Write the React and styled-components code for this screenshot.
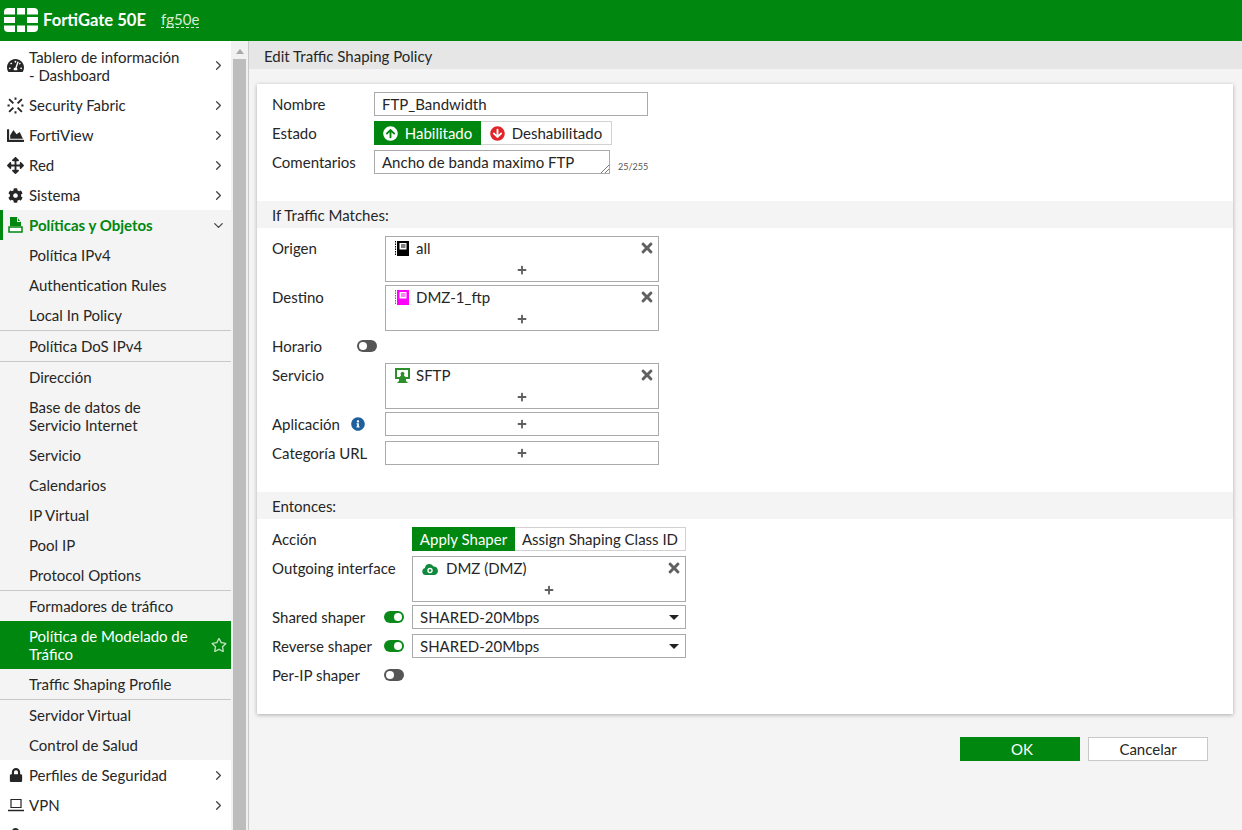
import styled, { createGlobalStyle } from "styled-components";
import {
  FaTachometerAlt,
  FaChartArea,
  FaArrowsAlt,
  FaCog,
  FaLock,
  FaArrowCircleUp,
  FaArrowCircleDown,
  FaTimes,
  FaPlus,
  FaInfoCircle,
  FaRegStar,
  FaUser,
} from "react-icons/fa";
import { FiChevronRight, FiChevronDown } from "react-icons/fi";

const GREEN = "#00870f";

const Global = createGlobalStyle`
  html, body {
    margin: 0;
    height: 100%;
    overflow: hidden;
    background: #f4f4f4;
    font-family: Lato, "Liberation Sans", sans-serif;
    font-size: 15px;
    color: #262626;
  }
  * { box-sizing: border-box; }
`;

const Logo = () => (
  <svg width="34" height="24" viewBox="0 0 34 24">
    <g fill="#fff">
      <path d="M0 6.500V4a4 4 0 0 1 4-4h7v6.500z" />
      <path d="M13 0h8v6.500h-8z" />
      <path d="M23 0h7a4 4 0 0 1 4 4v2.500H23z" />
      <path d="M0 9h11v6H0z" />
      <path d="M23 9h11v6H23z" />
      <path d="M0 17.500h11V24H4a4 4 0 0 1-4-4z" />
      <path d="M13 17.500h8V24h-8z" />
      <path d="M23 17.500h11V20a4 4 0 0 1-4 4h-7z" />
    </g>
  </svg>
);

const FabricIcon = () => (
  <svg width="17" height="17" viewBox="0 0 16 16" fill="none" stroke="#262626" strokeWidth="1.800">
    <path d="M2 2l4 4M10 10l4 4M14 2l-4 4M6 10l-4 4M8 .5v2M8 13.500v2M.5 8h2M13.500 8h2" />
  </svg>
);

const LaptopIcon = () => (
  <svg width="16" height="14" viewBox="0 0 16 14" fill="none" stroke="#262626" strokeWidth="1.200">
    <path d="M3 1.500h10v8H3z" />
    <path strokeWidth="1.500" d="M0 12.500h16" />
  </svg>
);

const PolicyIcon = () => (
  <svg width="15" height="16" viewBox="0 0 15 16">
    <path fill={GREEN} d="M2 0h7l4 5v4H2z" />
    <path fill="#f4f4f4" d="M9 0v5h4z" />
    <path fill={GREEN} d="M10 1.500l2 2.500h-2z" />
    <path fill="#fff" stroke={GREEN} strokeWidth="1.500" d="M1 10h13v5H1z" />
  </svg>
);

const BookIcon = ({ color }) => (
  <svg width="15" height="15" viewBox="0 0 15 15">
    <path fill={color} d="M2 0h12v15H2z" />
    <path fill="#fff" d="M4.500 2h7v6.500h-7z" />
    <path fill={color} d="M6 3.500h4.500v1H6zM6 5.500h4.500v1H6z" />
    <path fill="none" stroke={color} strokeDasharray="1.500 1" d="M.5 0v15" />
  </svg>
);

const ServiceIcon = () => (
  <svg width="15" height="15" viewBox="0 0 15 15">
    <path fill="#2c8f2c" d="M0 0h15v11h-4v2l2 2H2l2-2v-2H0z" />
    <path fill="#fff" d="M2 2h11v7h-2.500L9 7.500V7a2 2 0 0 0 0-2.500 2 2 0 0 0-3 0A2 2 0 0 0 6 7v.5L4.500 9H2z" />
  </svg>
);

const CloudIcon = () => (
  <svg width="16" height="12" viewBox="0 0 16 12">
    <path fill="#0f8a3c" d="M4 12a3.500 3.500 0 0 1-1-6.900A4.500 4.500 0 0 1 11.500 3.500 4.300 4.300 0 0 1 12.500 12z" />
    <circle cx="8" cy="7.500" r="2.700" fill="#fff" />
    <circle cx="8" cy="7.500" r="1.300" fill="#0f8a3c" />
  </svg>
);

const Page = styled.div`
  width: 1242px;
  height: 830px;
  display: flex;
  flex-direction: column;
  overflow: hidden;
`;

const Header = styled.header`
  height: 41px;
  flex: none;
  background: ${GREEN};
  color: #fff;
  display: flex;
  align-items: center;
  padding: 0 0 1px 4px;
`;

const Brand = styled.span`
  margin-left: 5px;
  font-size: 16.600px;
  font-weight: 700;
`;

const HostName = styled.span`
  margin-left: 15px;
  font-size: 15px;
  color: #d6ecd6;
  border-bottom: 1px dashed #cfe6cf;
  line-height: 15px;
`;

const Body = styled.div`
  flex: 1;
  display: flex;
  min-height: 0;
`;

const Nav = styled.nav`
  width: 231px;
  flex: none;
  background: #fff;
  overflow: hidden;
`;

const Item = styled.div`
  position: relative;
  display: flex;
  align-items: center;
  min-height: ${(p) => (p.$h ? p.$h : p.$tall ? 48 : p.$rule ? 31 : 30)}px;
  padding: ${(p) => (p.$sub ? "0 40px 0 29px" : "0 5px 0 29px")};
  line-height: 18px;
  background: ${(p) => (p.$active ? GREEN : p.$tint ? "#f4f4f4" : "transparent")};
  color: ${(p) => (p.$active ? "#fff" : p.$open ? GREEN : "inherit")};
  font-weight: ${(p) => (p.$open ? 700 : 400)};
  border-top: ${(p) => (p.$rule ? "1px solid #c8c8c8" : "0")};
  box-shadow: ${(p) => (p.$open ? `inset 3px 0 0 ${GREEN}` : "none")};
`;

const ItemIcon = styled.span`
  position: absolute;
  left: 7px;
  top: 50%;
  transform: translateY(-50%);
  width: 17px;
  height: 16px;
  display: flex;
  align-items: center;
  justify-content: center;
  font-size: ${(p) => p.$size || 17}px;
  color: #262626;
`;

const Chevron = styled.span`
  margin-left: auto;
  display: flex;
  width: 15px;
  font-size: 15px;
  color: #444;
`;

const StarMark = styled(FaRegStar)`
  position: absolute;
  right: 4px;
  top: 16px;
  font-size: 16px;
  color: #bfe3c0;
`;

const ScrollTrack = styled.div`
  width: 18px;
  flex: none;
  background: #f1f1f1;
  border-right: 1px solid #c9c9c9;
  padding: 8px 2px 0 2px;
  display: flex;
  flex-direction: column;
  align-items: center;
`;

const ScrollUp = styled.div`
  border: 4px solid transparent;
  border-top: 0;
  border-bottom: 5px solid #a9a9a9;
  margin-bottom: 5px;
`;

const ScrollThumb = styled.div`
  width: 13px;
  flex: 1;
  background: #bdbdbd;
`;

const Main = styled.main`
  flex: 1;
  min-width: 0;
  background: #f4f4f4;
`;

const TitleBar = styled.div`
  height: 28px;
  background: #e6e6e6;
  padding-left: 15px;
  line-height: 31px;
`;

const Card = styled.section`
  margin: 15px 9px 0 8px;
  height: 630px;
  background: #fff;
  box-shadow: 0 1px 4px rgba(0, 0, 0, 0.3);
  padding-top: 8px;
`;

const Block = styled.div`
  padding-left: 15px;
  padding-top: ${(p) => p.$pt || 0}px;
  padding-bottom: ${(p) => p.$pb || 0}px;
`;

const Row = styled.div`
  display: flex;
  align-items: flex-start;
  min-height: 24px;
  margin-bottom: ${(p) => p.$mb ?? 5}px;
  line-height: 24px;
`;

const Label = styled.div`
  width: ${(p) => p.$w}px;
  flex: none;
  display: flex;
  align-items: center;
  height: 24px;
`;

const TextField = styled.div`
  width: 274px;
  height: 24px;
  border: 1px solid #aaa;
  padding-left: 7px;
  line-height: 22px;
`;

const Comment = styled.div`
  position: relative;
  width: 236px;
  height: 24px;
  border: 1px solid #aaa;
  padding-left: 7px;
  line-height: 22px;
`;

const Grip = styled.svg`
  position: absolute;
  right: 0;
  bottom: 0;
`;

const Counter = styled.span`
  margin-left: 8px;
  font-size: 9px;
  line-height: 10px;
  padding-top: 12px;
  color: #555;
`;

const Segment = styled.div`
  height: 24px;
  display: flex;
  align-items: center;
  gap: ${(p) => (p.$icon ? 7 : 0)}px;
  width: ${(p) => p.$w}px;
  justify-content: center;
  flex: none;
  background: ${(p) => (p.$on ? GREEN : "#fff")};
  color: ${(p) => (p.$on ? "#fff" : "inherit")};
  border: 1px solid ${(p) => (p.$on ? GREEN : "#d2d2d2")};
  border-left-width: ${(p) => (p.$on ? 1 : 0)}px;
  svg { font-size: 15px; }
`;

const SectionHead = styled.div`
  height: 27px;
  background: #f4f4f4;
  padding-left: 15px;
  line-height: 29px;
`;

const Picker = styled.div`
  position: relative;
  width: 274px;
  height: ${(p) => (p.$single ? 24 : 46)}px;
  border: 1px solid #aaa;
`;

const Entry = styled.div`
  display: flex;
  align-items: center;
  height: 23px;
  padding-left: ${(p) => p.$pl || 9}px;
  gap: ${(p) => p.$gap || 6}px;
  line-height: 23px;
`;

const RemoveMark = styled(FaTimes)`
  position: absolute;
  right: 3px;
  top: 3px;
  font-size: 16px;
  color: #606060;
`;

const AddMark = styled.div`
  display: flex;
  align-items: center;
  justify-content: center;
  height: ${(p) => (p.$single ? 22 : 20)}px;
  padding-right: 1px;
  font-size: 10px;
  color: #606060;
`;

const Toggle = styled.span`
  position: relative;
  display: inline-block;
  width: 20px;
  height: 12px;
  border-radius: 6px;
  background: ${(p) => (p.$on ? "#0b8a1a" : "#555")};
  &::after {
    content: "";
    position: absolute;
    top: 2px;
    left: ${(p) => (p.$on ? "10px" : "2px")};
    width: 8px;
    height: 8px;
    border-radius: 50%;
    background: #fff;
  }
`;

const Select = styled.div`
  width: 274px;
  height: 24px;
  border: 1px solid #aaa;
  padding: 0 6px 0 7px;
  display: flex;
  align-items: center;
  justify-content: space-between;
  &::after {
    content: "";
    border: 5.500px solid transparent;
    border-top: 5px solid #222;
    border-bottom: 0;
  }
`;

const HintIcon = styled(FaInfoCircle)`
  margin-left: 11px;
  font-size: 14px;
  color: #1f5f9c;
`;

const Actions = styled.div`
  display: flex;
  justify-content: flex-end;
  gap: 8px;
  margin: 23px 34px 0 0;
`;

const ActionButton = styled.button`
  width: 120px;
  height: 24px;
  padding: 0 0 0 ${(p) => (p.$primary ? 4 : 0)}px;
  font: inherit;
  background: ${(p) => (p.$primary ? GREEN : "#fff")};
  color: ${(p) => (p.$primary ? "#fff" : "inherit")};
  border: 1px solid ${(p) => (p.$primary ? GREEN : "#c8c8c8")};
`;

const menu = [
  { text: <>Tablero de información<br />- Dashboard</>, icon: <FaTachometerAlt />, more: true, h: 49 },
  { text: "Security Fabric", icon: <FabricIcon />, more: true },
  { text: "FortiView", icon: <FaChartArea />, more: true },
  { text: "Red", icon: <FaArrowsAlt />, more: true },
  { text: "Sistema", icon: <FaCog />, size: 15, more: true },
  { text: "Políticas y Objetos", icon: <PolicyIcon />, open: true },
  { text: "Política IPv4", sub: true },
  { text: "Authentication Rules", sub: true },
  { text: "Local In Policy", sub: true },
  { text: "Política DoS IPv4", sub: true, rule: true },
  { text: "Dirección", sub: true, rule: true },
  { text: <>Base de datos de<br />Servicio Internet</>, sub: true, tall: true },
  { text: "Servicio", sub: true },
  { text: "Calendarios", sub: true },
  { text: "IP Virtual", sub: true },
  { text: "Pool IP", sub: true },
  { text: "Protocol Options", sub: true },
  { text: "Formadores de tráfico", sub: true, rule: true },
  { text: <>Política de Modelado de<br />Tráfico</>, sub: true, tall: true, active: true },
  { text: "Traffic Shaping Profile", sub: true },
  { text: "Servidor Virtual", sub: true, rule: true },
  { text: "Control de Salud", sub: true },
  { text: "Perfiles de Seguridad", icon: <FaLock />, size: 14, more: true },
  { text: "VPN", icon: <LaptopIcon />, more: true },
  { text: "", icon: <FaUser />, size: 15 },
];

const App = () => {
  return (
    <>
      <Global />
      <Page>
        <Header>
          <Logo />
          <Brand>FortiGate 50E</Brand>
          <HostName>fg50e</HostName>
        </Header>
        <Body>
          <Nav>
            {menu.map((m, i) => (
              <Item
                key={i}
                $h={m.h}
                $tall={m.tall}
                $sub={m.sub}
                $tint={m.sub || m.open}
                $open={m.open}
                $active={m.active}
                $rule={m.rule}
              >
                {m.icon && <ItemIcon $size={m.size}>{m.icon}</ItemIcon>}
                <span>{m.text}</span>
                {m.more && <Chevron><FiChevronRight /></Chevron>}
                {m.open && <Chevron><FiChevronDown /></Chevron>}
                {m.active && <StarMark />}
              </Item>
            ))}
          </Nav>
          <ScrollTrack>
            <ScrollUp />
            <ScrollThumb />
          </ScrollTrack>
          <Main>
            <TitleBar>Edit Traffic Shaping Policy</TitleBar>
            <Card>
              <Block $pb={27}>
                <Row>
                  <Label $w={102}>Nombre</Label>
                  <TextField>FTP_Bandwidth</TextField>
                </Row>
                <Row>
                  <Label $w={102}>Estado</Label>
                  <Segment $on $icon $w={107}><FaArrowCircleUp />Habilitado</Segment>
                  <Segment $icon $w={131}><FaArrowCircleDown color="#e0262b" />Deshabilitado</Segment>
                </Row>
                <Row $mb={0}>
                  <Label $w={102}>Comentarios</Label>
                  <Comment>
                    Ancho de banda maximo FTP
                    <Grip width="9" height="9" viewBox="0 0 9 9" stroke="#777">
                      <path d="M1 9l8-8M5 9l4-4" />
                    </Grip>
                  </Comment>
                  <Counter>25/255</Counter>
                </Row>
              </Block>
              <SectionHead>If Traffic Matches:</SectionHead>
              <Block $pt={8} $pb={27}>
                <Row $mb={3}>
                  <Label $w={113}>Origen</Label>
                  <Picker>
                    <Entry><BookIcon color="#000" />all</Entry>
                    <AddMark><FaPlus /></AddMark>
                    <RemoveMark />
                  </Picker>
                </Row>
                <Row $mb={3}>
                  <Label $w={113}>Destino</Label>
                  <Picker>
                    <Entry><BookIcon color="#f0f" />DMZ-1_ftp</Entry>
                    <AddMark><FaPlus /></AddMark>
                    <RemoveMark />
                  </Picker>
                </Row>
                <Row $mb={5}>
                  <Label $w={85}>Horario</Label>
                  <Label $w={20}><Toggle /></Label>
                </Row>
                <Row $mb={3}>
                  <Label $w={113}>Servicio</Label>
                  <Picker>
                    <Entry><ServiceIcon />SFTP</Entry>
                    <AddMark><FaPlus /></AddMark>
                    <RemoveMark />
                  </Picker>
                </Row>
                <Row>
                  <Label $w={113}>Aplicación<HintIcon /></Label>
                  <Picker $single><AddMark $single><FaPlus /></AddMark></Picker>
                </Row>
                <Row $mb={0}>
                  <Label $w={113}>Categoría URL</Label>
                  <Picker $single><AddMark $single><FaPlus /></AddMark></Picker>
                </Row>
              </Block>
              <SectionHead>Entonces:</SectionHead>
              <Block $pt={8}>
                <Row>
                  <Label $w={140}>Acción</Label>
                  <Segment $on $w={103}>Apply Shaper</Segment>
                  <Segment $w={171}>Assign Shaping Class ID</Segment>
                </Row>
                <Row $mb={3}>
                  <Label $w={140}>Outgoing interface</Label>
                  <Picker>
                    <Entry $gap={8}><CloudIcon />DMZ (DMZ)</Entry>
                    <AddMark><FaPlus /></AddMark>
                    <RemoveMark />
                  </Picker>
                </Row>
                <Row>
                  <Label $w={112}>Shared shaper</Label>
                  <Label $w={28}><Toggle $on /></Label>
                  <Select>SHARED-20Mbps</Select>
                </Row>
                <Row>
                  <Label $w={112}>Reverse shaper</Label>
                  <Label $w={28}><Toggle $on /></Label>
                  <Select>SHARED-20Mbps</Select>
                </Row>
                <Row>
                  <Label $w={112}>Per-IP shaper</Label>
                  <Label $w={28}><Toggle /></Label>
                </Row>
              </Block>
            </Card>
            <Actions>
              <ActionButton $primary>OK</ActionButton>
              <ActionButton>Cancelar</ActionButton>
            </Actions>
          </Main>
        </Body>
      </Page>
    </>
  );
};

export default App;
